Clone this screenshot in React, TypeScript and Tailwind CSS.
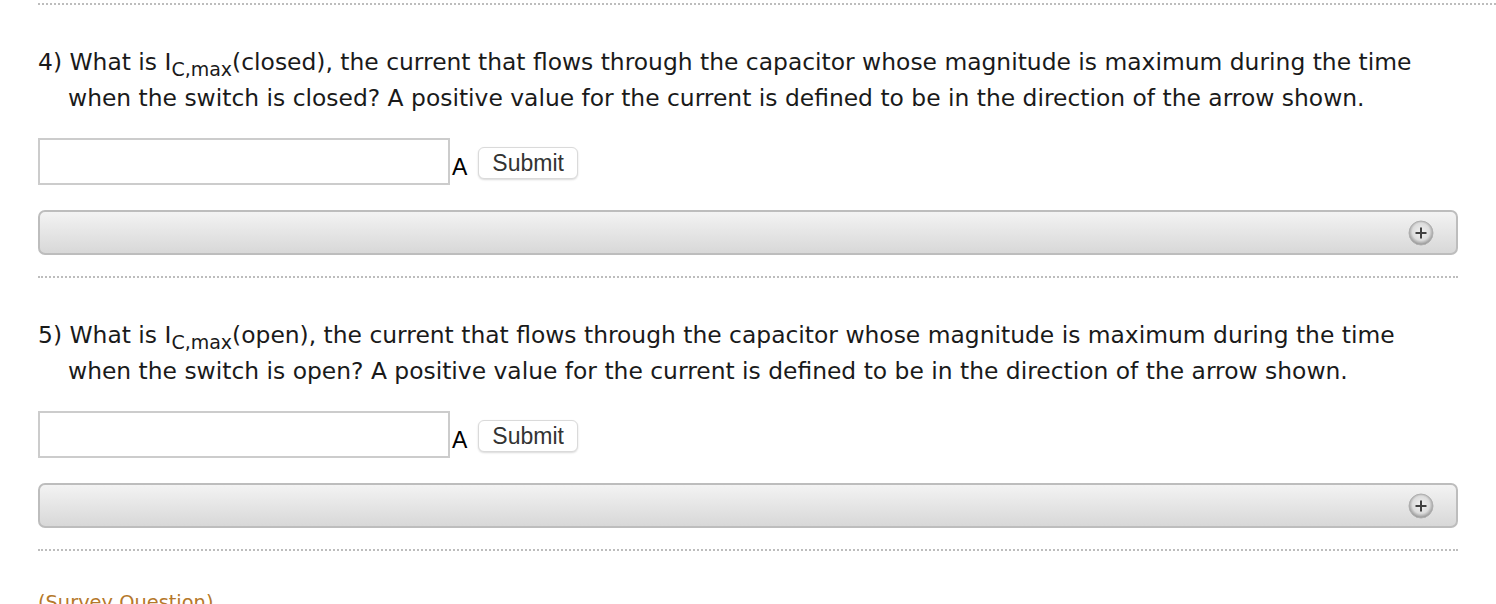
import React from 'react';

// Small plus-in-circle glyph used on the collapsed hint bars
const PlusCircle = () => (
    <svg width="26" height="26" viewBox="0 0 26 26">
        <defs>
            <radialGradient id="pc" cx="50%" cy="45%" r="55%">
                <stop offset="0%" stopColor="#f2f2f2" />
                <stop offset="65%" stopColor="#dcdcdc" />
                <stop offset="100%" stopColor="#8f8f8f" />
            </radialGradient>
        </defs>
        <circle cx="13" cy="13" r="12" fill="url(#pc)" stroke="#b0b0b0" strokeWidth="1" />
        <path d="M13 7.5v11M7.5 13h11" stroke="#404040" strokeWidth="2" />
    </svg>
);

interface QuestionProps {
    num: number;
    state: string;
}

const Question: React.FC<QuestionProps> = ({ num, state }) => (
    <div className="pt-[40px] pb-[21px]">
        <p className="pl-[30px] -indent-[30px] text-[23.4px] leading-[35px] text-[#1a1a1a]">
            {num}) What is I<span className="text-[19px] relative top-[6px]">C,max</span>({state}), the current that flows through the capacitor whose magnitude is maximum during the time when the switch is {state}? A positive value for the current is defined to be in the direction of the arrow shown.
        </p>
        <div className="flex items-end mt-[22px]">
            <input type="text" className="w-[412px] h-[47px] border-2 border-[#cccccc] bg-white outline-none" />
            <span className="ml-[2px] mb-[6px] text-[23px] leading-none text-black font-['Liberation_Sans',sans-serif]">A</span>
            <button className="ml-[11px] mb-[6px] h-[32px] px-[13px] bg-white border border-[#dadada] rounded-[6px] shadow-[0_1px_2px_rgba(0,0,0,0.15)] text-[23px] leading-none text-[#333] font-['Liberation_Sans',sans-serif]">
                Submit
            </button>
        </div>
        <div className="mt-[25px] h-[45px] rounded-[7px] border-2 border-[#bdbdbd] bg-gradient-to-b from-[#f3f3f3] to-[#d8d8d8] flex items-center justify-end pr-[22px]">
            <PlusCircle />
        </div>
    </div>
);

const Dots = () => <div className="border-t-2 border-dotted border-[#bdbdbd]" />;

export default function App() {
    return (
        <div className="w-[1496px] h-[604px] overflow-hidden bg-white font-['DejaVu_Sans',sans-serif]">
            <div className="pt-[3px] pl-[38px]">
                <Dots />
            </div>
            <div className="px-[38px]">
                <Question num={4} state="closed" />
                <Dots />
                <Question num={5} state="open" />
                <Dots />
                <div className="pt-[37px]">
                    <p className="text-[19.4px] leading-[30px] text-[#b5782a]">(Survey Question)</p>
                </div>
            </div>
        </div>
    );
}
